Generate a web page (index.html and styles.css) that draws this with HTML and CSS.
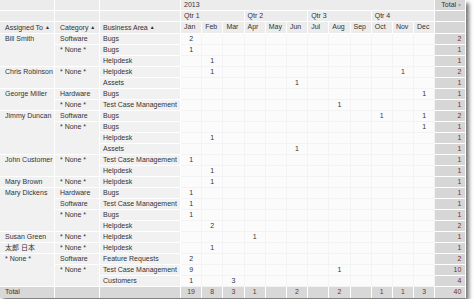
FILE: index.html
```html
<!DOCTYPE html>
<html>
<head>
<meta charset="utf-8">
<link rel="stylesheet" href="styles.css">
</head>
<body>
<div class="wrap">
<table class="pivot">
<colgroup>
<col class="w-a"><col class="w-c"><col class="w-b">
<col class="w-m"><col class="w-m"><col class="w-m"><col class="w-m"><col class="w-m"><col class="w-m">
<col class="w-m"><col class="w-m"><col class="w-m"><col class="w-m"><col class="w-m"><col class="w-m">
<col class="w-t">
</colgroup>
<thead>
<tr class="hd"><th class="a"></th><th class="c"></th><th class="b"></th><th class="mh" colspan="12">2013</th><th class="th">Total <span class="arr-d">▾</span></th></tr>
<tr class="hd"><th class="a"></th><th class="c"></th><th class="b"></th><th class="mh" colspan="3">Qtr 1</th><th class="mh" colspan="3">Qtr 2</th><th class="mh" colspan="3">Qtr 3</th><th class="mh" colspan="3">Qtr 4</th><th class="th"></th></tr>
<tr class="hd"><th class="a">Assigned To <span class="arr">▲</span></th><th class="c">Category <span class="arr">▲</span></th><th class="b">Business Area <span class="arr">▲</span></th><th class="mh">Jan</th><th class="mh">Feb</th><th class="mh">Mar</th><th class="mh">Apr</th><th class="mh">May</th><th class="mh">Jun</th><th class="mh">Jul</th><th class="mh">Aug</th><th class="mh">Sep</th><th class="mh">Oct</th><th class="mh">Nov</th><th class="mh">Dec</th><th class="th"></th></tr>
</thead>
<tbody>
<tr><td class="a" rowspan="3">Bill Smith</td><td class="c">Software</td><td class="b">Bugs</td><td class="v">2</td><td class="v"></td><td class="v"></td><td class="v"></td><td class="v"></td><td class="v"></td><td class="v"></td><td class="v"></td><td class="v"></td><td class="v"></td><td class="v"></td><td class="v"></td><td class="t">2</td></tr>
<tr><td class="c" rowspan="2">* None *</td><td class="b">Bugs</td><td class="v">1</td><td class="v"></td><td class="v"></td><td class="v"></td><td class="v"></td><td class="v"></td><td class="v"></td><td class="v"></td><td class="v"></td><td class="v"></td><td class="v"></td><td class="v"></td><td class="t">1</td></tr>
<tr><td class="b">Helpdesk</td><td class="v"></td><td class="v">1</td><td class="v"></td><td class="v"></td><td class="v"></td><td class="v"></td><td class="v"></td><td class="v"></td><td class="v"></td><td class="v"></td><td class="v"></td><td class="v"></td><td class="t">1</td></tr>
<tr><td class="a" rowspan="2">Chris Robinson</td><td class="c" rowspan="2">* None *</td><td class="b">Helpdesk</td><td class="v"></td><td class="v">1</td><td class="v"></td><td class="v"></td><td class="v"></td><td class="v"></td><td class="v"></td><td class="v"></td><td class="v"></td><td class="v"></td><td class="v">1</td><td class="v"></td><td class="t">2</td></tr>
<tr><td class="b">Assets</td><td class="v"></td><td class="v"></td><td class="v"></td><td class="v"></td><td class="v"></td><td class="v">1</td><td class="v"></td><td class="v"></td><td class="v"></td><td class="v"></td><td class="v"></td><td class="v"></td><td class="t">1</td></tr>
<tr><td class="a" rowspan="2">George Miller</td><td class="c">Hardware</td><td class="b">Bugs</td><td class="v"></td><td class="v"></td><td class="v"></td><td class="v"></td><td class="v"></td><td class="v"></td><td class="v"></td><td class="v"></td><td class="v"></td><td class="v"></td><td class="v"></td><td class="v">1</td><td class="t">1</td></tr>
<tr><td class="c">* None *</td><td class="b">Test Case Management</td><td class="v"></td><td class="v"></td><td class="v"></td><td class="v"></td><td class="v"></td><td class="v"></td><td class="v"></td><td class="v">1</td><td class="v"></td><td class="v"></td><td class="v"></td><td class="v"></td><td class="t">1</td></tr>
<tr><td class="a" rowspan="4">Jimmy Duncan</td><td class="c">Software</td><td class="b">Bugs</td><td class="v"></td><td class="v"></td><td class="v"></td><td class="v"></td><td class="v"></td><td class="v"></td><td class="v"></td><td class="v"></td><td class="v"></td><td class="v">1</td><td class="v"></td><td class="v">1</td><td class="t">2</td></tr>
<tr><td class="c" rowspan="3">* None *</td><td class="b">Bugs</td><td class="v"></td><td class="v"></td><td class="v"></td><td class="v"></td><td class="v"></td><td class="v"></td><td class="v"></td><td class="v"></td><td class="v"></td><td class="v"></td><td class="v"></td><td class="v">1</td><td class="t">1</td></tr>
<tr><td class="b">Helpdesk</td><td class="v"></td><td class="v">1</td><td class="v"></td><td class="v"></td><td class="v"></td><td class="v"></td><td class="v"></td><td class="v"></td><td class="v"></td><td class="v"></td><td class="v"></td><td class="v"></td><td class="t">1</td></tr>
<tr><td class="b">Assets</td><td class="v"></td><td class="v"></td><td class="v"></td><td class="v"></td><td class="v"></td><td class="v">1</td><td class="v"></td><td class="v"></td><td class="v"></td><td class="v"></td><td class="v"></td><td class="v"></td><td class="t">1</td></tr>
<tr><td class="a" rowspan="2">John Customer</td><td class="c" rowspan="2">* None *</td><td class="b">Test Case Management</td><td class="v">1</td><td class="v"></td><td class="v"></td><td class="v"></td><td class="v"></td><td class="v"></td><td class="v"></td><td class="v"></td><td class="v"></td><td class="v"></td><td class="v"></td><td class="v"></td><td class="t">1</td></tr>
<tr><td class="b">Helpdesk</td><td class="v"></td><td class="v">1</td><td class="v"></td><td class="v"></td><td class="v"></td><td class="v"></td><td class="v"></td><td class="v"></td><td class="v"></td><td class="v"></td><td class="v"></td><td class="v"></td><td class="t">1</td></tr>
<tr><td class="a">Mary Brown</td><td class="c">* None *</td><td class="b">Helpdesk</td><td class="v"></td><td class="v">1</td><td class="v"></td><td class="v"></td><td class="v"></td><td class="v"></td><td class="v"></td><td class="v"></td><td class="v"></td><td class="v"></td><td class="v"></td><td class="v"></td><td class="t">1</td></tr>
<tr><td class="a" rowspan="4">Mary Dickens</td><td class="c">Hardware</td><td class="b">Bugs</td><td class="v">1</td><td class="v"></td><td class="v"></td><td class="v"></td><td class="v"></td><td class="v"></td><td class="v"></td><td class="v"></td><td class="v"></td><td class="v"></td><td class="v"></td><td class="v"></td><td class="t">1</td></tr>
<tr><td class="c">Software</td><td class="b">Test Case Management</td><td class="v">1</td><td class="v"></td><td class="v"></td><td class="v"></td><td class="v"></td><td class="v"></td><td class="v"></td><td class="v"></td><td class="v"></td><td class="v"></td><td class="v"></td><td class="v"></td><td class="t">1</td></tr>
<tr><td class="c" rowspan="2">* None *</td><td class="b">Bugs</td><td class="v">1</td><td class="v"></td><td class="v"></td><td class="v"></td><td class="v"></td><td class="v"></td><td class="v"></td><td class="v"></td><td class="v"></td><td class="v"></td><td class="v"></td><td class="v"></td><td class="t">1</td></tr>
<tr><td class="b">Helpdesk</td><td class="v"></td><td class="v">2</td><td class="v"></td><td class="v"></td><td class="v"></td><td class="v"></td><td class="v"></td><td class="v"></td><td class="v"></td><td class="v"></td><td class="v"></td><td class="v"></td><td class="t">2</td></tr>
<tr><td class="a">Susan Green</td><td class="c">* None *</td><td class="b">Helpdesk</td><td class="v"></td><td class="v"></td><td class="v"></td><td class="v">1</td><td class="v"></td><td class="v"></td><td class="v"></td><td class="v"></td><td class="v"></td><td class="v"></td><td class="v"></td><td class="v"></td><td class="t">1</td></tr>
<tr><td class="a">太郎 日本</td><td class="c">* None *</td><td class="b">Helpdesk</td><td class="v"></td><td class="v">1</td><td class="v"></td><td class="v"></td><td class="v"></td><td class="v"></td><td class="v"></td><td class="v"></td><td class="v"></td><td class="v"></td><td class="v"></td><td class="v"></td><td class="t">1</td></tr>
<tr><td class="a" rowspan="3">* None *</td><td class="c">Software</td><td class="b">Feature Requests</td><td class="v">2</td><td class="v"></td><td class="v"></td><td class="v"></td><td class="v"></td><td class="v"></td><td class="v"></td><td class="v"></td><td class="v"></td><td class="v"></td><td class="v"></td><td class="v"></td><td class="t">2</td></tr>
<tr><td class="c" rowspan="2">* None *</td><td class="b">Test Case Management</td><td class="v">9</td><td class="v"></td><td class="v"></td><td class="v"></td><td class="v"></td><td class="v"></td><td class="v"></td><td class="v">1</td><td class="v"></td><td class="v"></td><td class="v"></td><td class="v"></td><td class="t">10</td></tr>
<tr><td class="b">Customers</td><td class="v">1</td><td class="v"></td><td class="v">3</td><td class="v"></td><td class="v"></td><td class="v"></td><td class="v"></td><td class="v"></td><td class="v"></td><td class="v"></td><td class="v"></td><td class="v"></td><td class="t">4</td></tr>
</tbody>
<tfoot>
<tr class="tot"><td class="a">Total</td><td class="c"></td><td class="b"></td><td class="v">19</td><td class="v">8</td><td class="v">3</td><td class="v">1</td><td class="v"></td><td class="v">2</td><td class="v"></td><td class="v">2</td><td class="v"></td><td class="v">1</td><td class="v">1</td><td class="v">3</td><td class="t">40</td></tr>
</tfoot>
</table>
</div>
</body>
</html>
```

FILE: styles.css
```css
html, body {
  margin: 0;
  padding: 0;
  background: #ffffff;
}

body {
  font-family: "Liberation Sans", Arial, "Noto Sans CJK JP", sans-serif;
  font-size: 7px;
  color: #333333;
}

.wrap {
  display: inline-block;
  box-shadow: 3px 3px 4px rgba(0, 0, 0, 0.55);
}

.pivot {
  border-collapse: separate;
  border-spacing: 0;
  table-layout: fixed;
  width: 466px;
}

.w-a { width: 55px; }
.w-c { width: 45px; }
.w-b { width: 81px; }
.w-m { width: 21.2px; }
.w-t { width: 31px; }

.pivot th,
.pivot td {
  height: 10px;
  line-height: 10px;
  padding: 0;
  border-right: 1px solid #ffffff;
  border-bottom: 1px solid #ffffff;
  white-space: nowrap;
  overflow: hidden;
  font-weight: normal;
  text-align: left;
  vertical-align: top;
  box-sizing: content-box;
}

.pivot th {
  background: #ececec;
}

.pivot td.a { padding-left: 5px; background: #f1f1f1; }
.pivot td.c { padding-left: 5px; background: #f1f1f1; }
.pivot td.b { padding-left: 3px; background: #f1f1f1; }
.pivot th.a { padding-left: 5px; }
.pivot th.c { padding-left: 5px; }
.pivot th.b { padding-left: 3px; }
.pivot th.mh { padding-left: 3px; }

.pivot th.th {
  background: #d6d6d6;
  padding-left: 6px;
}

.arr {
  font-size: 5px;
  vertical-align: 1px;
}

.arr-d {
  color: #a5a5a5;
  font-size: 6px;
}

.pivot td.v {
  background: #fbfbfb;
  text-align: center;
  border-right-color: #f3f3f3;
  border-bottom-color: #f3f3f3;
}

.pivot td.t {
  background: #d6d6d6;
  text-align: right;
  padding-right: 4px;
  color: #7d2b2b;
}

.pivot tr.tot td {
  background: #d8d8d8;
  border-right-color: #ffffff;
  border-bottom: none;
  height: 11px;
}

.pivot tr.tot td.v,
.pivot tr.tot td.t {
  color: #7d2b2b;
}

.pivot tr.tot td.a {
  color: #333333;
}
```
